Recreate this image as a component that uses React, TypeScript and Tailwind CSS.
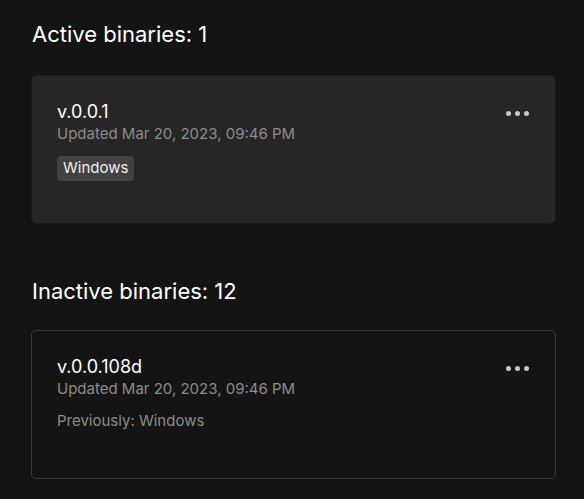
import React from "react";

type Binary = {
  version: string;
  updated: string;
  platform: string;
};

const active: Binary[] = [
  { version: "v.0.0.1", updated: "Updated Mar 20, 2023, 09:46 PM", platform: "Windows" },
];

const inactive: Binary[] = [
  { version: "v.0.0.108d", updated: "Updated Mar 20, 2023, 09:46 PM", platform: "Windows" },
];

const Dots = () => (
  <button className="flex items-center gap-[4px] h-6 px-0.5 mt-[1px]">
    <span className="w-[5px] h-[5px] rounded-full bg-[#c8c8c8]" />
    <span className="w-[5px] h-[5px] rounded-full bg-[#c8c8c8]" />
    <span className="w-[5px] h-[5px] rounded-full bg-[#c8c8c8]" />
  </button>
);

/* ---------------- Binary card ---------------- */
const BinaryCard: React.FC<{ item: Binary; isActive: boolean }> = ({ item, isActive }) => {
  return (
    <div
      className={`h-[149px] rounded-[5px] border pl-[25px] pr-[24px] pt-[24px] flex justify-between ${
        isActive ? "bg-[#262626] border-[#1a1a1a]" : "bg-[#141414] border-[#3a3a3a]"
      }`}
    >
      <div className="flex flex-col">
        <span className="text-[18px] leading-6 text-white">{item.version}</span>
        <span className="text-[15px] leading-5 text-[#8c8c8c]">{item.updated}</span>
        {isActive ? (
          <span className="self-start mt-[12px] h-[25px] flex items-center px-[6px] rounded-[4px] bg-[#424242] text-[15px] text-[#f0f0f0]">
            {item.platform}
          </span>
        ) : (
          <span className="mt-[12px] text-[15px] leading-5 text-[#8c8c8c]">
            Previously: {item.platform}
          </span>
        )}
      </div>
      <Dots />
    </div>
  );
};

export default function App() {
  return (
    <div
      className="min-h-screen bg-[#141414] pt-[18px] pl-[31px] pr-[28px]"
      style={{ fontFamily: "Inter, 'Noto Sans', sans-serif" }}
    >
      <h2 className="text-[22px] leading-8 text-white pl-px">Active binaries: {active.length}</h2>
      <div className="mt-[25px] flex flex-col gap-4">
        {active.map((b) => (
          <BinaryCard key={b.version} item={b} isActive />
        ))}
      </div>

      <h2 className="mt-[51px] text-[22px] leading-8 text-white pl-px">Inactive binaries: 12</h2>
      <div className="mt-[23px] flex flex-col gap-4 pb-6">
        {inactive.map((b) => (
          <BinaryCard key={b.version} item={b} isActive={false} />
        ))}
      </div>
    </div>
  );
}
